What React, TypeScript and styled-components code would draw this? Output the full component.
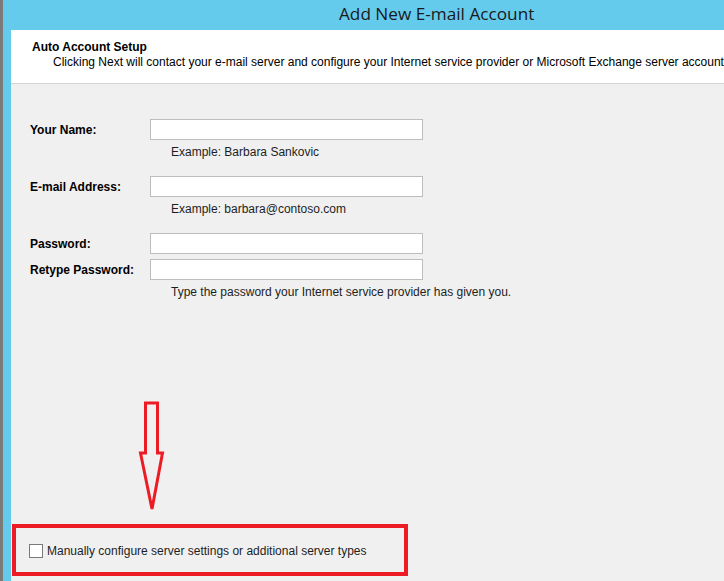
import React from "react";
import styled, { createGlobalStyle } from "styled-components";

const GlobalStyle = createGlobalStyle`
  html, body {
    margin: 0;
    padding: 0;
    background: #f0f0f0;
    overflow: hidden;
  }
  * {
    box-sizing: border-box;
  }
`;

const uiColors = {
  frame: "#65cbec",
  edge: "#7a7a7a",
  body: "#f0f0f0",
  text: "#000000",
  hint: "#1e1e1e",
  inputBorder: "#bdbdbd",
  annotation: "#ed1c24",
};

const font = `Tahoma, "Liberation Sans", Arial, sans-serif`;

const Window = styled.div`
  width: 724px;
  height: 581px;
  display: flex;
  flex-direction: column;
  background: ${uiColors.frame};
  border-left: 3px solid ${uiColors.edge};
  overflow: hidden;
`;

const TitleBar = styled.div`
  height: 30px;
  flex: none;
  padding-left: 336px;
  font-family: "Open Sans", "Noto Sans", sans-serif;
  font-size: 17.2px;
  line-height: 28px;
  color: #1a1a1a;
  white-space: nowrap;
`;

const Client = styled.div`
  flex: 1;
  margin-left: 8px;
  display: flex;
  flex-direction: column;
  min-height: 0;
  width: 760px;
`;

const Header = styled.div`
  height: 54px;
  flex: none;
  background: #ffffff;
  border-bottom: 1px solid #d5d5d5;
  padding: 10px 0 0 21px;
  font-family: ${font};
  font-size: 12px;
  color: ${uiColors.text};
  white-space: nowrap;
`;

const HeaderTitle = styled.div`
  font-weight: bold;
  line-height: 15px;
`;

const HeaderText = styled.div`
  padding-left: 21px;
  line-height: 15px;
`;

const Body = styled.div`
  flex: 1;
  background: ${uiColors.body};
  display: flex;
  flex-direction: column;
  padding: 35px 0 5px 1px;
  font-family: ${font};
  font-size: 12px;
  color: ${uiColors.text};
  width: 713px;
`;

const Field = styled.div<{ $gap: number }>`
  display: grid;
  grid-template-columns: 120px 273px;
  align-items: center;
  margin-top: ${(p) => p.$gap}px;
  padding-left: 18px;
`;

const Label = styled.label`
  font-weight: bold;
  white-space: nowrap;
`;

const TextBox = styled.input`
  height: 21px;
  width: 273px;
  margin: 0;
  border: 1px solid ${uiColors.inputBorder};
  background: #ffffff;
  outline: none;
`;

const Hint = styled.div`
  padding-left: 159px;
  margin-top: 5px;
  line-height: 14px;
  color: ${uiColors.hint};
  white-space: nowrap;
`;

const ArrowWrap = styled.div`
  margin-top: auto;
  padding-left: 125px;
  height: 112px;
  flex: none;
`;

const ManualBox = styled.div`
  width: 396px;
  height: 52px;
  flex: none;
  border: 4px solid ${uiColors.annotation};
  display: flex;
  align-items: center;
  gap: 4px;
  padding: 2px 0 0 13px;
  margin-top: 12px;
`;

const CheckBox = styled.span`
  width: 14px;
  height: 14px;
  flex: none;
  border: 1px solid #7a7a7a;
  background: #ffffff;
`;

const CheckLabel = styled.span`
  white-space: nowrap;
  color: ${uiColors.hint};
`;

const DownArrow = () => (
  <svg width="30" height="112" viewBox="0 0 30 112">
    <path
      d="M8.5 3 H20.5 V53 H25.5 L15 109 L3.5 53 H8.5 Z"
      fill="none"
      stroke={uiColors.annotation}
      strokeWidth="3"
      strokeLinejoin="miter"
    />
  </svg>
);

export default function App() {
  return (
    <>
      <GlobalStyle />
      <Window>
        <TitleBar>Add New E-mail Account</TitleBar>
        <Client>
          <Header>
            <HeaderTitle>Auto Account Setup</HeaderTitle>
            <HeaderText>
              Clicking Next will contact your e-mail server and configure your
              Internet service provider or Microsoft Exchange server account.
            </HeaderText>
          </Header>
          <Body>
            <Field $gap={0}>
              <Label>Your Name:</Label>
              <TextBox type="text" />
            </Field>
            <Hint>Example: Barbara Sankovic</Hint>

            <Field $gap={17}>
              <Label>E-mail Address:</Label>
              <TextBox type="text" />
            </Field>
            <Hint>Example: barbara@contoso.com</Hint>

            <Field $gap={17}>
              <Label>Password:</Label>
              <TextBox type="password" />
            </Field>
            <Field $gap={5}>
              <Label>Retype Password:</Label>
              <TextBox type="password" />
            </Field>
            <Hint>Type the password your Internet service provider has given you.</Hint>

            <ArrowWrap>
              <DownArrow />
            </ArrowWrap>
            <ManualBox>
              <CheckBox />
              <CheckLabel>Manually configure server settings or additional server types</CheckLabel>
            </ManualBox>
          </Body>
        </Client>
      </Window>
    </>
  );
}
